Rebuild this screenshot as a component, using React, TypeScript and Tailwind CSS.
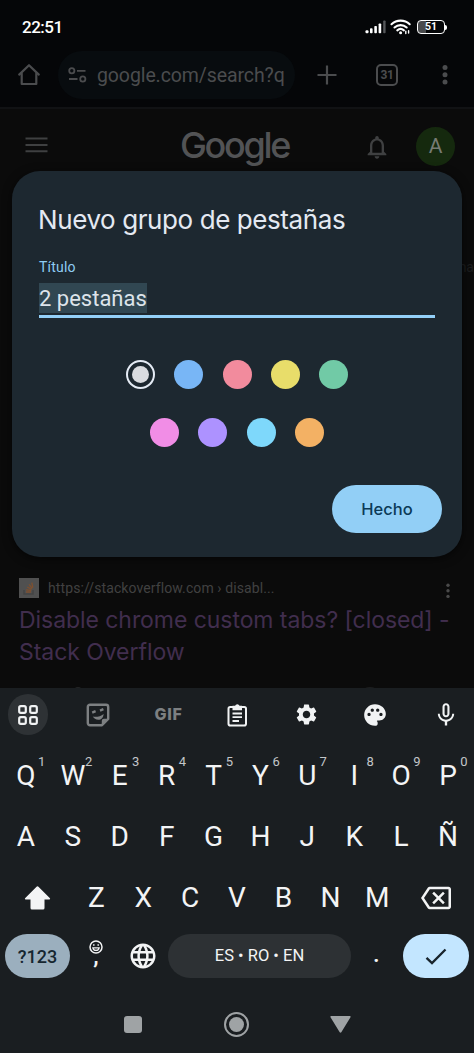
import { MdLanguage, MdMicNone, MdNotificationsNone, MdOutlineBackspace, MdPalette, MdSettings } from 'react-icons/md';

const ROW_TOP = ['Q', 'W', 'E', 'R', 'T', 'Y', 'U', 'I', 'O', 'P'];
const ROW_MID = ['A', 'S', 'D', 'F', 'G', 'H', 'J', 'K', 'L', 'Ñ'];
const ROW_LOW = ['Z', 'X', 'C', 'V', 'B', 'N', 'M'];

const COLORS_TOP = ['bg-[#78b6f6]', 'bg-[#f28b9d]', 'bg-[#e8dd6a]', 'bg-[#71caa6]'];
const COLORS_LOW = ['bg-[#f18de6]', 'bg-[#ad92ff]', 'bg-[#7ed8fb]', 'bg-[#f3b164]'];

function StatusBar() {
  return (
    <div className="flex h-[51px] items-center pl-[22px] pr-[27px] pt-[3px] text-white">
      <span className="text-[17px] font-medium leading-none tracking-[-0.5px]">22:51</span>
      <div className="ml-auto flex items-center">
        <svg width="22" height="14" viewBox="0 0 22 14" fill="currentColor">
          <rect x="0.5" y="10.3" width="3" height="3" rx="1" />
          <rect x="5" y="8.3" width="2.6" height="5" rx="0.8" />
          <rect x="9.3" y="6" width="2.6" height="7.3" rx="0.8" />
          <rect x="13.6" y="3.5" width="2.6" height="9.8" rx="0.8" />
          <rect x="18.2" y="0.5" width="2.4" height="12.8" rx="0.8" fill="#55575a" />
        </svg>
        <svg className="ml-[3px]" width="22" height="16" viewBox="0 0 22 16" fill="none" stroke="currentColor" strokeWidth="2.1" strokeLinecap="round">
          <path d="M1.5 5.2a13.4 13.4 0 0 1 18.2 0" />
          <path d="M4.5 8.5a9 9 0 0 1 12.2 0" />
          <path d="M7.3 11.4a5 5 0 0 1 6.6 0" />
          <circle cx="10.6" cy="13.8" r="1.5" fill="currentColor" stroke="none" />
          <path d="M15.8 12.3v2.2M18.6 11.8v2.2" strokeWidth="1.4" />
        </svg>
        <div className="ml-[5px] flex items-center">
          <div className="flex h-[14px] w-[28px] items-center justify-center rounded-[4px] border-[1.5px] border-white bg-linear-to-r from-[#4a4b4d] from-30% to-transparent to-30% text-[10.5px] font-bold leading-none">51</div>
          <div className="h-[5px] w-[2px] rounded-r-sm bg-white" />
        </div>
      </div>
    </div>
  );
}

function BrowserBar() {
  return (
    <div className="flex h-[58px] items-start border-b-2 border-[#111214] text-[#4b4c4e]">
      <svg className="ml-[17px] mt-[12px] shrink-0" width="24" height="24" viewBox="0 0 24 24" fill="none" stroke="currentColor" strokeWidth="2.2" strokeLinejoin="round" strokeLinecap="round">
        <path d="M4.7 10.5V21h14.6V10.5" />
        <path d="M2.2 11.6 12 2.2l9.8 9.4" />
      </svg>
      <div className="ml-[17px] flex h-[48px] w-[237px] shrink-0 items-center rounded-full bg-[#080c0f] pl-[10px]">
        <svg className="shrink-0" width="19" height="16" viewBox="0 0 19 16" fill="none" stroke="currentColor" strokeWidth="1.8">
          <circle cx="3.8" cy="3.8" r="2.6" />
          <path d="M9 3.8h8.5M1 12h8.5" />
          <circle cx="14.8" cy="12" r="2.6" />
        </svg>
        <span className="ml-[10px] mt-[2px] whitespace-nowrap text-[19.5px] leading-none tracking-[-0.1px]">google.com/search?q</span>
      </div>
      <svg className="ml-[22px] mt-[14px] shrink-0" width="20" height="20" viewBox="0 0 20 20" stroke="currentColor" strokeWidth="2.2">
        <path d="M10 .5v19M.5 10h19" />
      </svg>
      <div className="ml-[39px] mt-[13px] flex h-[22px] w-[22px] items-center justify-center rounded-[5px] border-2 border-current text-[12px] font-bold leading-none tracking-[-0.3px]">31</div>
      <svg className="ml-[44px] mt-[13px] shrink-0" width="6" height="22" viewBox="0 0 6 22" fill="currentColor">
        <circle cx="3" cy="3.5" r="2.5" />
        <circle cx="3" cy="10.7" r="2.5" />
        <circle cx="3" cy="18" r="2.5" />
      </svg>
    </div>
  );
}

function SearchPage() {
  return (
    <div className="flex flex-1 flex-col overflow-hidden bg-[#0b0b0b]">
      <div className="flex h-[75px] shrink-0 items-center text-[#3f4041]">
        <svg className="ml-[25px] -mt-[3px]" width="23" height="16" viewBox="0 0 23 16" stroke="currentColor" strokeWidth="2">
          <path d="M.5 1.5h22M.5 8h22M.5 14.2h22" />
        </svg>
        <span className="ml-[132px] -mt-[4px] w-[114px] whitespace-nowrap font-[Inter,sans-serif] text-[36px] font-medium leading-[46px] tracking-[-2.3px] text-[#525355]">Google</span>
        <MdNotificationsNone className="ml-[69px]" size={28} />
        <div className="ml-[25px] flex h-[39px] w-[39px] items-center justify-center rounded-full bg-[#15290e] text-[21px] text-[#777b74]">A</div>
      </div>
      <div className="mt-[74px] flex justify-end text-[14px] leading-[18px] text-[#1c1d1e]">na</div>
      <div className="mt-[302px] flex h-[20px] shrink-0 items-center pl-[19px] text-[#414141]">
        <div className="flex h-[20px] w-[20px] items-end justify-center bg-[#505050] pb-[3px]">
          <svg width="12" height="13" viewBox="0 0 12 13" fill="none" strokeWidth="1.4">
            <path d="M1 8v4h9V8" stroke="#444" />
            <path d="M3 10h5M3.2 7.8l5 .8M4.2 5l4.4 2.4M6 2.4l3.2 4M8.8.6l1 5" stroke="#7d5030" />
          </svg>
        </div>
        <span className="ml-[9px] whitespace-nowrap text-[14px] tracking-[0.1px]">https://stackoverflow.com › disabl...</span>
        <svg className="ml-auto mr-[23px] mt-[6px]" width="6" height="16" viewBox="0 0 6 16" fill="#4a4a4a">
          <circle cx="3" cy="2.2" r="1.7" />
          <circle cx="3" cy="7.8" r="1.7" />
          <circle cx="3" cy="13.4" r="1.7" />
        </svg>
      </div>
      <h3 className="mt-[6px] whitespace-nowrap pl-[19px] font-[Inter,sans-serif] text-[23px] leading-[32px] tracking-[-0.06px] text-[#412e4e]">
        Disable chrome custom tabs? [closed] -
        <br />
        Stack Overflow
      </h3>
      <div className="mt-[19px] flex shrink-0 pl-[74px]">
        <div className="h-[8px] w-[8px] rounded-full bg-[#242526]" />
        <div className="ml-[276px] h-[24px] w-[24px] rounded-full bg-[#1d1e1f]" />
      </div>
    </div>
  );
}

function GroupDialog() {
  return (
    <div className="absolute left-[12px] top-[171px] flex h-[386px] w-[450px] flex-col rounded-[28px] bg-[#1d2830] pl-[26px] pr-[20px] shadow-[0_2px_10px_rgba(0,0,0,0.6)]">
      <h2 className="mt-[32px] whitespace-nowrap font-[Inter,sans-serif] text-[26px] leading-[34px] tracking-[-0.41px] text-[#e4e9f2]">Nuevo grupo de pestañas</h2>
      <label className="ml-[1px] mt-[21px] text-[14px] leading-[18px] tracking-[0.2px] text-[#8fcdf4]">Título</label>
      <div className="ml-[1px] mr-[7px] mt-[7px] flex h-[35px] items-start border-b-[3px] border-[#93d0f8]">
        <span className="h-[30px] whitespace-nowrap bg-[#314752] text-[22px] leading-[32px] text-[#dde4ea]">2 pestañas</span>
      </div>
      <div className="ml-[88px] mt-[41.5px] flex gap-[19.25px]">
        <div className="flex h-[29px] w-[29px] items-center justify-center rounded-full border-2 border-[#e4ebf4]">
          <div className="h-[17px] w-[17px] rounded-full bg-[#dadce0]" />
        </div>
        {COLORS_TOP.map(c => (
          <div key={c} className={`h-[29px] w-[29px] rounded-full ${c}`} />
        ))}
      </div>
      <div className="ml-[112px] mt-[29px] flex gap-[19.25px]">
        {COLORS_LOW.map(c => (
          <div key={c} className={`h-[29px] w-[29px] rounded-full ${c}`} />
        ))}
      </div>
      <button className="ml-auto mt-[38.5px] h-[48px] w-[110px] rounded-full bg-[#92cff6] font-[Inter,sans-serif] text-[16.5px] font-medium text-[#0b3a57]">Hecho</button>
    </div>
  );
}

function KeyboardTools() {
  return (
    <div className="flex h-[53px] shrink-0 items-center text-[#f1f3f4]">
      <div className="ml-[8px] flex h-[41px] w-[40px] items-center justify-center rounded-full bg-[#2e3235]">
        <svg width="20" height="20" viewBox="0 0 20 20" fill="none" stroke="currentColor" strokeWidth="2.2">
          <rect x="1.2" y="1.2" width="6.6" height="6.6" rx="1.6" />
          <rect x="12.2" y="1.2" width="6.6" height="6.6" rx="1.6" />
          <rect x="1.2" y="12.2" width="6.6" height="6.6" rx="1.6" />
          <rect x="12.2" y="12.2" width="6.6" height="6.6" rx="1.6" />
        </svg>
      </div>
      <svg className="ml-[38px] text-[#7d8082]" width="24" height="24" viewBox="0 0 24 24" fill="none" stroke="currentColor" strokeWidth="2.4" strokeLinejoin="round">
        <path d="M4 1.8h16a2.2 2.2 0 0 1 2.2 2.2v12l-6.2 6.2H4A2.2 2.2 0 0 1 1.8 20V4A2.2 2.2 0 0 1 4 1.8Z" />
        <path d="M22 15.8h-4.2a2 2 0 0 0-2 2V22Z" fill="currentColor" stroke="none" />
        <path d="M6.2 9.6l3.4-1.4M14 7.6l3.4-1.4" />
        <path d="M6.8 13.6c4 .6 8-.3 10.8-2.7-.2 3.6-2.3 5.9-5.3 5.9-2.5 0-4.5-1.2-5.5-3.2Z" fill="currentColor" stroke="none" />
      </svg>
      <span className="ml-[43px] w-[31px] text-center font-[Inter,sans-serif] text-[16px] font-extrabold leading-[21px] tracking-[0.7px] text-[#7d8082]">GIF</span>
      <svg className="ml-[43px]" width="21" height="24" viewBox="0 0 21 24" fill="none" stroke="currentColor" strokeWidth="2">
        <rect x="1.5" y="4" width="17.5" height="18.5" rx="1.8" />
        <path d="M5.5 2.8h2.6a2.3 2.3 0 0 1 4.4 0H15v4.5H5.5Z" fill="currentColor" stroke="none" />
        <path d="M5.5 10.5h9.5M5.5 14.2h9.5M5.5 18h6.5" strokeWidth="1.8" />
      </svg>
      <MdSettings className="ml-[45.5px]" size={25} />
      <MdPalette className="ml-[43.5px]" size={26} />
      <MdMicNone className="ml-[44px]" size={28} />
    </div>
  );
}

function Keyboard() {
  return (
    <div className="flex h-[365px] shrink-0 flex-col bg-[#1a1e21] text-[#f3f4f5]">
      <KeyboardTools />
      <div className="grid h-[65px] grid-cols-10 pl-[2.5px] pr-[2.5px] pt-[7px] text-[28px] leading-[56px]">
        {ROW_TOP.map((k, i) => (
          <div key={k} className="relative text-center">
            {k}
            <span className="absolute right-[4px] top-[6px] text-[13px] leading-[15px] text-[#c3c6c9]">{(i + 1) % 10}</span>
          </div>
        ))}
      </div>
      <div className="grid h-[61px] grid-cols-10 pl-[2.5px] pr-[2.5px] text-center text-[28px] leading-[62px]">
        {ROW_MID.map(k => <div key={k}>{k}</div>)}
      </div>
      <div className="flex h-[61px] items-center text-center text-[28px] leading-[61px]">
        <svg className="ml-[24px] mr-[22px] shrink-0" width="27" height="24" viewBox="0 0 27 24" fill="currentColor">
          <path d="M12.3.9a1.7 1.7 0 0 1 2.4 0l11 11c.8.8.4 1.7-.7 1.7h-4.5V22a1.5 1.5 0 0 1-1.5 1.5H8A1.5 1.5 0 0 1 6.5 22v-8.4H2c-1.1 0-1.5-.9-.7-1.7Z" />
        </svg>
        {ROW_LOW.map(k => <div key={k} className="w-[46.8px] shrink-0">{k}</div>)}
        <MdOutlineBackspace className="ml-[20px] shrink-0" size={30} />
      </div>
      <div className="flex h-[68px] items-start pl-[5px] pt-[6px]">
        <div className="flex h-[44px] w-[65px] items-center justify-center rounded-full bg-[#9bafbe] text-[18px] font-medium text-[#162630]">?123</div>
        <div className="ml-[19px] mt-[6px] flex w-[14px] flex-col items-center">
          <svg width="14" height="14" viewBox="0 0 14 14" fill="none" stroke="currentColor" strokeWidth="1.5">
            <circle cx="7" cy="7" r="6" />
            <path d="M3.8 7.8h6.4c-.3 1.7-1.6 2.6-3.2 2.6s-2.9-.9-3.2-2.6Z" strokeWidth="1.2" />
            <path d="M4.8 4.2v1.6M9.2 4.2v1.6" />
          </svg>
          <span className="h-[16px] text-[24px] font-medium leading-[5px]">,</span>
        </div>
        <MdLanguage className="ml-[25px] mt-[7px]" size={30} />
        <div className="ml-[10px] flex h-[44px] w-[183px] items-center justify-center rounded-full bg-[#2d3134] text-[16.5px]">ES • RO • EN</div>
        <span className="ml-[22px] mt-[6px] text-[24px] font-medium leading-[29px]">.</span>
        <div className="ml-auto mr-[5px] flex h-[44px] w-[66px] items-center justify-center rounded-full bg-[#c3e6ff] text-[#18242c]">
          <svg width="22" height="17" viewBox="0 0 22 17" fill="none" stroke="currentColor" strokeWidth="2.3">
            <path d="m1.5 9.8 5.5 5.3L20.5 1.5" />
          </svg>
        </div>
      </div>
      <div className="flex flex-1 items-center text-[#9fa3a5]">
        <div className="ml-[124px] h-[17px] w-[18px] rounded-[3px] bg-current" />
        <div className="ml-[82px] flex h-[25px] w-[25px] items-center justify-center rounded-full border-2 border-current">
          <div className="h-[15px] w-[15px] rounded-full bg-current" />
        </div>
        <svg className="ml-[81px]" width="21" height="17" viewBox="0 0 21 17" fill="currentColor">
          <path d="M1.2 0h18.6c.8 0 1.1.7.7 1.3l-9.2 15c-.4.6-1.2.6-1.6 0L.5 1.3C.1.7.4 0 1.2 0Z" />
        </svg>
      </div>
    </div>
  );
}

export default function App() {
  return (
    <div className="relative flex h-[1053px] w-[474px] flex-col overflow-hidden bg-[#050608] font-[Roboto,sans-serif]">
      <StatusBar />
      <BrowserBar />
      <SearchPage />
      <Keyboard />
      <GroupDialog />
    </div>
  );
}
